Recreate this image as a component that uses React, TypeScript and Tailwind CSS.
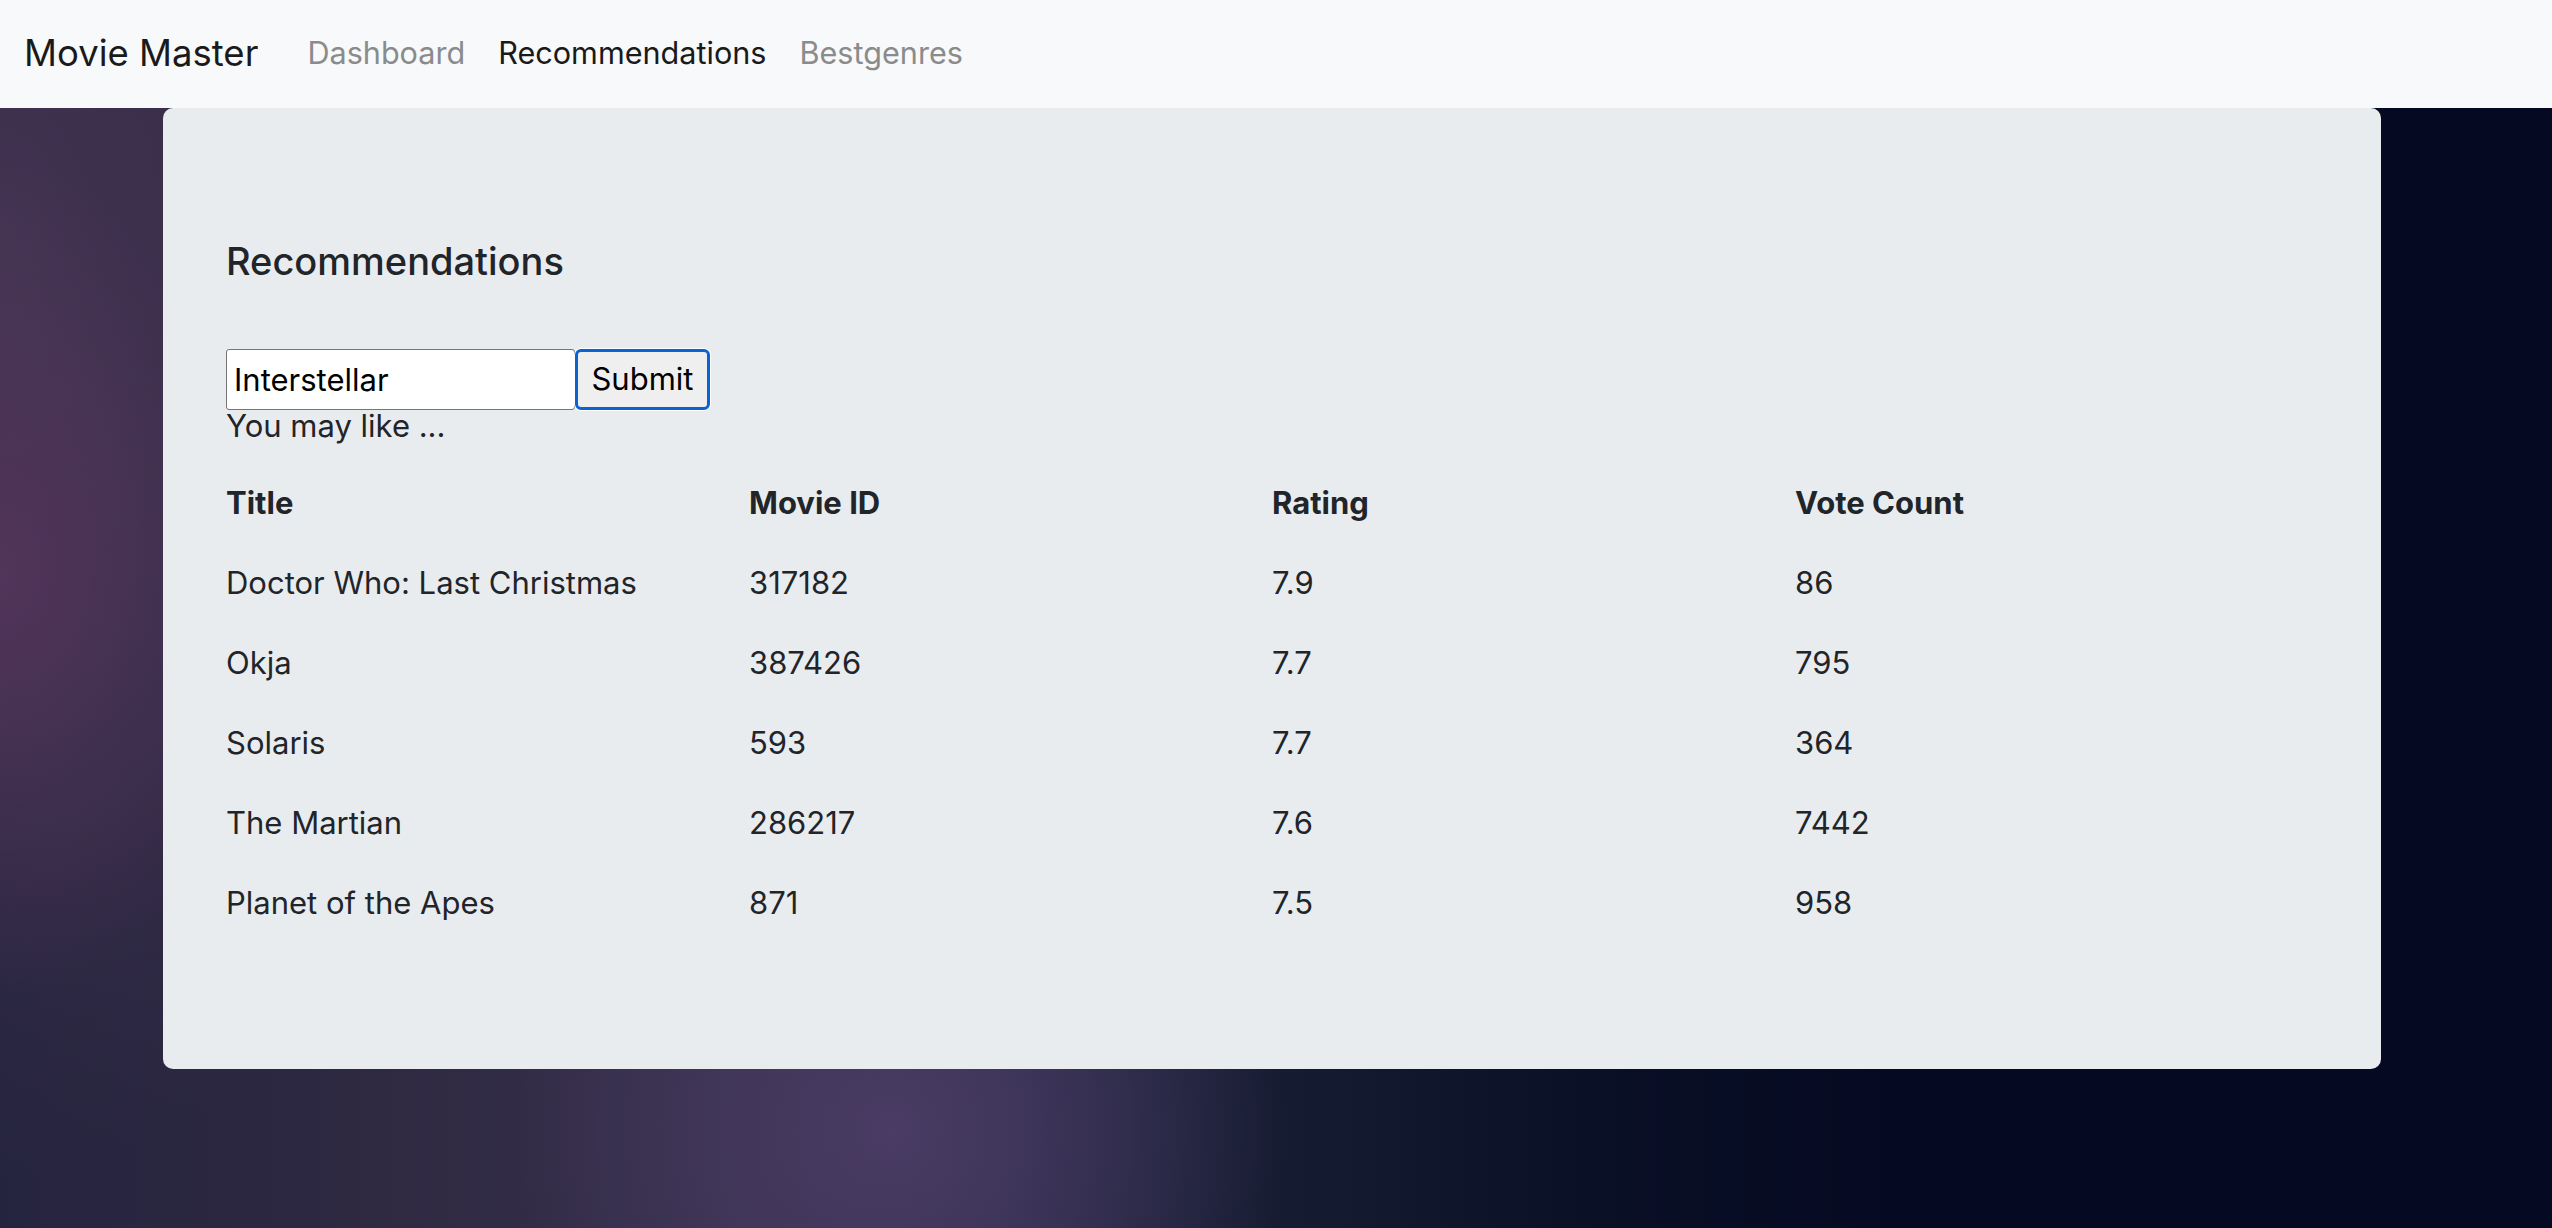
import React from 'react';

interface Movie {
  title: string;
  id: number;
  rating: number;
  votes: number;
}

const movies: Movie[] = [
  { title: 'Doctor Who: Last Christmas', id: 317182, rating: 7.9, votes: 86 },
  { title: 'Okja', id: 387426, rating: 7.7, votes: 795 },
  { title: 'Solaris', id: 593, rating: 7.7, votes: 364 },
  { title: 'The Martian', id: 286217, rating: 7.6, votes: 7442 },
  { title: 'Planet of the Apes', id: 871, rating: 7.5, votes: 958 },
];

const NavBar: React.FC = () => {
  return (
    <nav className="h-[108px] bg-[#f8f9fa] flex items-center pl-[24px] pb-[2px]">
      <span className="text-[36.5px] text-[#1a1a1a] mr-[49px]">Movie Master</span>
      <div className="flex items-center gap-[33px] text-[30.6px]">
        <a className="text-[#8a8b8c]">Dashboard</a>
        <a className="text-[#1a1a1a]">Recommendations</a>
        <a className="text-[#8a8b8c]">Bestgenres</a>
      </div>
    </nav>
  );
};

const App: React.FC = () => {
  const headers = ['Title', 'Movie ID', 'Rating', 'Vote Count'];

  return (
    <div
      className="min-h-screen font-['Inter','Noto_Sans',sans-serif] bg-[#050a22] bg-[image:radial-gradient(ellipse_360px_520px_at_0%_47%,rgba(92,56,96,0.7),transparent_80%),radial-gradient(ellipse_620px_1100px_at_0%_20%,rgba(68,52,82,0.95),transparent_85%),radial-gradient(ellipse_520px_520px_at_35%_92%,rgba(78,62,104,0.85),transparent_75%),linear-gradient(90deg,#25243f_0%,#2f2942_15%,#35304c_30%,#2a2a48_40%,#161c32_50%,#0a1026_62%,#050a22_74%,#050a22_100%)]"
    >
      <NavBar />
      <div className="pl-[163px] pr-[171px]">
        <div className="bg-[#e9ecef] rounded-[10px] pt-[130px] pb-[126px] px-[63px] text-[#212529] text-[31px]">
          <h5 className="text-[38px] leading-[46px] font-medium mb-[65px]">Recommendations</h5>
          <form className="flex items-stretch" onSubmit={e => e.preventDefault()}>
            <input
              defaultValue="Interstellar"
              className="w-[349px] h-[61px] bg-white border border-[#767676] rounded-[3px] pl-[7px] text-[31px] text-black outline-none"
            />
            <button
              type="submit"
              className="w-[135px] h-[61px] bg-[#efefef] border-[3px] border-[#0b63d1] rounded-[6px] text-[31px] text-black ring-1 ring-white"
            >
              Submit
            </button>
          </form>
          <p className="leading-[32px]">You may like ...</p>
          <div className="mt-[21px]">
            <div className="grid grid-cols-4 h-[80px] items-center font-bold">
              {headers.map(h => (
                <div key={h}>{h}</div>
              ))}
            </div>
            {movies.map(m => (
              <div key={m.id} className="grid grid-cols-4 h-[80px] items-center">
                <div>{m.title}</div>
                <div>{m.id}</div>
                <div>{m.rating}</div>
                <div>{m.votes}</div>
              </div>
            ))}
          </div>
        </div>
      </div>
    </div>
  );
};

export default App;
